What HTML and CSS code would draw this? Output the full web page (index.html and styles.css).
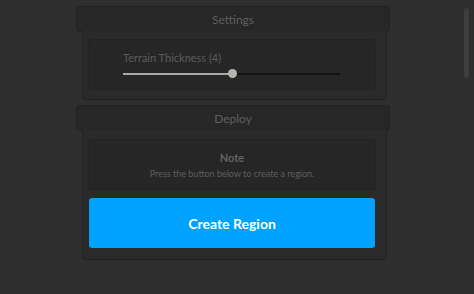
FILE: index.html
```html
<!DOCTYPE html>
<html lang="en">
<head>
    <meta charset="UTF-8">
    <meta name="viewport" content="width=device-width, initial-scale=1.0">
    <title>Region Plugin</title>
    <link rel="stylesheet" href="styles.css">
</head>
<body>

<div class="panel-list">
    <div class="section">
        <div class="section-header">Settings</div>
        <div class="section-body">
            <div class="inset slider-box">
                <div class="slider-label">Terrain Thickness (4)</div>
                <div class="slider">
                    <div class="slider-fill" style="width: 50%;"></div>
                    <div class="slider-knob" style="left: 50%;"></div>
                </div>
            </div>
        </div>
    </div>

    <div class="section">
        <div class="section-header">Deploy</div>
        <div class="section-body deploy-body">
            <div class="inset note-box">
                <div class="note-title">Note</div>
                <div class="note-text">Press the button below to create a region.</div>
            </div>
            <button class="create-btn">Create Region</button>
        </div>
    </div>
</div>

<div class="scroll-thumb"></div>

</body>
</html>
```

FILE: styles.css
```css
body {
    font-family: Lato, "Open Sans", sans-serif;
    background-color: #2e2e2e;
    margin: 0;
    padding: 0;
    color: #666;
    height: 294px;
    overflow: hidden;
}

.panel-list {
    width: 314px;
    margin-left: 76px;
    padding-top: 6px;
    display: flex;
    flex-direction: column;
    gap: 5px;
}

.section-header {
    height: 24px;
    background-color: #272727;
    border: 1px solid #222;
    border-radius: 4px;
    display: flex;
    justify-content: center;
    align-items: center;
    font-size: 12px;
    color: #5f5f5f;
}

.section-body {
    margin: -1px 3px 0 6px;
    background-color: #2a2a2a;
    border: 1px solid #232323;
    border-top: none;
    border-radius: 0 0 4px 4px;
    padding: 8px 10px 9px 5px;
}

.deploy-body {
    padding-top: 9px;
    padding-bottom: 11px;
    display: flex;
    flex-direction: column;
    gap: 8px;
}

.inset {
    background-color: #262626;
    border: 1px solid #232323;
    border-radius: 3px;
}

.slider-box {
    height: 51px;
    padding-left: 34px;
    box-sizing: border-box;
    padding-top: 11px;
}

.slider-label {
    font-size: 11px;
    color: #5c5c5c;
    line-height: 14px;
}

.slider {
    position: relative;
    width: 217px;
    height: 2px;
    margin-top: 8px;
    background-color: #121212;
}

.slider-fill {
    height: 100%;
    background-color: #a9a9a3;
}

.slider-knob {
    position: absolute;
    top: -4px;
    width: 9px;
    height: 9px;
    margin-left: -4px;
    border-radius: 50%;
    background-color: #b5b5b0;
}

.note-box {
    height: 51px;
    box-sizing: border-box;
    display: flex;
    flex-direction: column;
    align-items: center;
    justify-content: center;
    gap: 4px;
}

.note-title {
    font-size: 11px;
    font-weight: bold;
    color: #626262;
}

.note-text {
    font-size: 9px;
    color: #5e5e5e;
}

.create-btn {
    height: 50px;
    margin: 0 1px;
    border: none;
    border-radius: 3px;
    background-color: #00a2ff;
    color: #fff;
    font-family: Lato, "Open Sans", sans-serif;
    font-weight: bold;
    font-size: 14px;
    cursor: pointer;
}

.scroll-thumb {
    position: fixed;
    top: 8px;
    left: 464px;
    width: 5px;
    height: 70px;
    border-radius: 3px;
    background-color: #3d3d3d;
}
```
